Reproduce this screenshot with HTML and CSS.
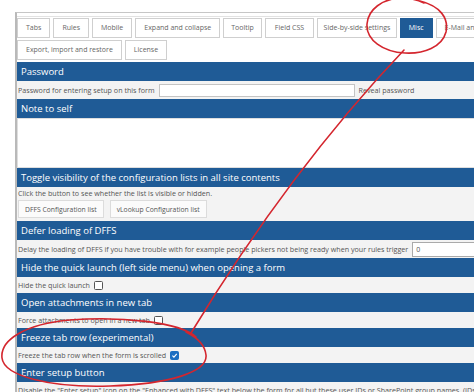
FILE: index.html
```html
<!DOCTYPE html>
<html lang="en">
<head>
  <meta charset="UTF-8" />
  <meta name="viewport" content="width=device-width, initial-scale=1.0"/>
  <title>DFFS - Misc</title>
  <link rel="stylesheet" href="styles.css">
</head>
<body>
  <div class="frame">
    <div class="tabs">
      <div class="tab-row">
        <span class="tab">Tabs</span>
        <span class="tab">Rules</span>
        <span class="tab">Mobile</span>
        <span class="tab">Expand and collapse</span>
        <span class="tab narrow">Tooltip</span>
        <span class="tab wide">Field CSS</span>
        <span class="tab tight">Side-by-side settings</span>
        <span class="tab active">Misc</span>
        <span class="tab">E-Mail and Print</span>
      </div>
      <div class="tab-row">
        <span class="tab">Export, import and restore</span>
        <span class="tab">License</span>
      </div>
    </div>

    <div class="head">Password</div>
    <div class="row row-input">
      <span>Password for entering setup on this form</span>
      <input class="pw" type="text">
      <span>Reveal password</span>
    </div>

    <div class="head">Note to self</div>
    <textarea class="note"></textarea>

    <div class="head">Toggle visibility of the configuration lists in all site contents</div>
    <div class="block">
      <div class="line">Click the button to see whether the list is visible or hidden.</div>
      <div class="buttons">
        <button>DFFS Configuration list</button>
        <button>vLookup Configuration list</button>
      </div>
    </div>

    <div class="head">Defer loading of DFFS</div>
    <div class="row row-input">
      <span>Delay the loading of DFFS if you have trouble with for example people pickers not being ready when your rules trigger</span>
      <input class="num" type="text" value="0">
    </div>

    <div class="head">Hide the quick launch (left side menu) when opening a form</div>
    <div class="row">
      <span>Hide the quick launch</span>
      <span class="check"></span>
    </div>

    <div class="head">Open attachments in new tab</div>
    <div class="row">
      <span>Force attachments to open in a new tab</span>
      <span class="check"></span>
    </div>

    <div class="head">Freeze tab row (experimental)</div>
    <div class="row">
      <span>Freeze the tab row when the form is scrolled</span>
      <span class="check on">
        <svg viewBox="0 0 10 10" width="7" height="7"><path d="M2 5.2 L4.2 7.3 L8.2 2.8" fill="none" stroke="#fff" stroke-width="1.6"/></svg>
      </span>
    </div>

    <div class="head">Enter setup button</div>
    <div class="row">
      <span>Disable the "Enter setup" icon on the "Enhanced with DFFS" text below the form for all but these user IDs or SharePoint group names. (IDs</span>
    </div>
  </div>

  <svg class="marks" width="474" height="392" viewBox="0 0 474 392">
    <path d="M420,1 C440,6 449,18 446,32 C442,47 424,54 405,53 C383,52 366,40 367,24 C368,9 383,-1 400,-2 C410,-2 418,0 424,3"/>
    <path d="M404,50 Q290,170 191,333"/>
    <path d="M196,337 C180,322 120,316 70,320 C25,324 0,340 2,358 C4,376 50,388 110,386 C170,384 208,372 206,355 C205,345 198,338 186,332"/>
  </svg>
</body>
</html>
```

FILE: styles.css
```css
html, body {
  margin: 0;
  overflow: hidden;
  background: #fff;
}
body {
  font-family: "Open Sans", "Noto Sans", sans-serif;
  color: #555;
  width: 474px;
  height: 392px;
  padding: 12px 0 0 15px;
  box-sizing: border-box;
}
.frame {
  width: 640px;
  border-top: 1px solid #c6c6c6;
  border-left: 2px solid #b9b9b9;
  padding-top: 3px;
}
.tabs {
  border-top: 1px solid #e2e2e2;
  padding-top: 1px;
}
.tab-row {
  display: flex;
  gap: 3px;
  margin-bottom: 2px;
}
.tab {
  height: 18px;
  line-height: 18px;
  padding: 0 8px;
  border: 1px solid #cfcfcf;
  background: #fff;
  color: #666;
  font-size: 7px;
  white-space: nowrap;
}
.tab.narrow {
  padding: 0 7px;
}
.tab.wide {
  padding: 0 9px;
}
.tab.tight {
  padding: 0 5.5px;
}
.tab.active {
  background: #1f5b96;
  border-color: #1f5b96;
  color: #fff;
}
.head {
  height: 19px;
  line-height: 19px;
  padding-left: 4px;
  background: #1f5b96;
  color: #fff;
  font-size: 9.5px;
  white-space: nowrap;
}
.row {
  display: flex;
  align-items: center;
  gap: 4px;
  height: 16px;
  padding-left: 1px;
  background: #f3f3f3;
  font-size: 7.15px;
  color: #555;
  white-space: nowrap;
}
.row-input {
  height: 18px;
}
.pw {
  width: 196px;
  height: 13px;
  box-sizing: border-box;
  border: 1px solid #c4c4c4;
  padding: 0;
  margin: 0;
}
.num {
  width: 120px;
  height: 15px;
  box-sizing: border-box;
  border: 1px solid #aaa;
  padding: 0 3px;
  margin: 0;
  font: 7px "Open Sans", sans-serif;
  color: #555;
}
.note {
  display: block;
  width: 100%;
  height: 50px;
  box-sizing: border-box;
  border: 1px solid #dedede;
  margin: 0;
  resize: none;
  background: #fff;
}
.block {
  background: #f3f3f3;
  padding: 0 0 3px 1px;
  font-size: 7.15px;
}
.line {
  height: 13px;
  line-height: 13px;
}
.buttons {
  display: flex;
  gap: 6px;
}
.buttons button {
  height: 18px;
  padding: 0 6px;
  border: 1px solid #dcdcdc;
  background: #fbfbfb;
  color: #555;
  font: 6.8px "Open Sans", sans-serif;
  margin: 0;
}
.check {
  display: inline-flex;
  align-items: center;
  justify-content: center;
  width: 7px;
  height: 7px;
  border: 1px solid #555;
  border-radius: 1.5px;
  background: #fff;
}
.check.on {
  background: #1b6ec2;
  border-color: #1b6ec2;
}
.marks {
  position: fixed;
  top: 0;
  left: 0;
  pointer-events: none;
}
.marks path {
  fill: none;
  stroke: #d4262e;
  stroke-width: 1.6;
  stroke-linecap: round;
}
```
